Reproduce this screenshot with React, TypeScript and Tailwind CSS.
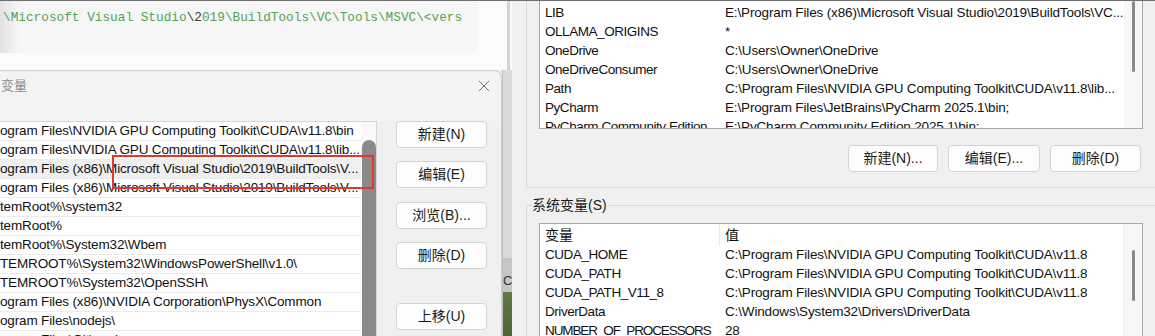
const ui = '"Liberation Sans", "Noto Sans CJK SC", sans-serif';

const leftRows = [
  "ogram Files\\NVIDIA GPU Computing Toolkit\\CUDA\\v11.8\\bin",
  "ogram Files\\NVIDIA GPU Computing Toolkit\\CUDA\\v11.8\\lib...",
  "ogram Files (x86)\\Microsoft Visual Studio\\2019\\BuildTools\\V...",
  "ogram Files (x86)\\Microsoft Visual Studio\\2019\\BuildTools\\V...",
  "temRoot%\\system32",
  "temRoot%",
  "temRoot%\\System32\\Wbem",
  "TEMROOT%\\System32\\WindowsPowerShell\\v1.0\\",
  "TEMROOT%\\System32\\OpenSSH\\",
  "ogram Files (x86)\\NVIDIA Corporation\\PhysX\\Common",
  "ogram Files\\nodejs\\",
  "ogram Files\\Git\\cmd",
];

const userVars = [
  ["LIB", "E:\\Program Files (x86)\\Microsoft Visual Studio\\2019\\BuildTools\\VC..."],
  ["OLLAMA_ORIGINS", "*"],
  ["OneDrive", "C:\\Users\\Owner\\OneDrive"],
  ["OneDriveConsumer", "C:\\Users\\Owner\\OneDrive"],
  ["Path", "C:\\Program Files\\NVIDIA GPU Computing Toolkit\\CUDA\\v11.8\\lib..."],
  ["PyCharm", "E:\\Program Files\\JetBrains\\PyCharm 2025.1\\bin;"],
  ["PyCharm Community Edition", "E:\\PyCharm Community Edition 2025.1\\bin;"],
];

const sysVars = [
  ["CUDA_HOME", "C:\\Program Files\\NVIDIA GPU Computing Toolkit\\CUDA\\v11.8"],
  ["CUDA_PATH", "C:\\Program Files\\NVIDIA GPU Computing Toolkit\\CUDA\\v11.8"],
  ["CUDA_PATH_V11_8", "C:\\Program Files\\NVIDIA GPU Computing Toolkit\\CUDA\\v11.8"],
  ["DriverData", "C:\\Windows\\System32\\Drivers\\DriverData"],
  ["NUMBER_OF_PROCESSORS", "28"],
];

function Btn({ label, className = "" }: { label: string; className?: string }) {
  return (
    <div
      className={`flex shrink-0 items-center justify-center rounded-[4px] border border-[#d3d3d3] bg-[#fdfdfd] text-[14px] text-[#1b1b1b] ${className}`}
    >
      {label}
    </div>
  );
}

function VarRow({ name, value }: { name: string; value: string }) {
  const tight = name.length > 18 && name === name.toUpperCase();
  return (
    <div className="flex h-[19px] items-center whitespace-nowrap text-[13.5px] text-[#111]">
      <div
        className={`w-[185px] shrink-0 overflow-hidden pl-[5px] ${
          tight ? "tracking-[-1.1px]" : "tracking-[-0.45px]"
        }`}
      >
        {name}
      </div>
      <div className="overflow-hidden tracking-[-0.15px]">{value}</div>
    </div>
  );
}

function EditDialog() {
  return (
    <div className="flex w-[502px] shrink-0 flex-col rounded-tr-[8px] border-t border-r border-[#cdcdcd] bg-[#f0f0f0]">
      <div className="flex h-[50px] items-start justify-between rounded-tr-[8px] bg-[#f3f3f3] pt-[5px]">
        <span className="pl-[1px] text-[13px] text-[#8c8c8c]">变量</span>
        <svg width="12" height="12" viewBox="0 0 12 12" className="mr-[11px] mt-[4px]">
          <path d="M1 1 L11 11 M11 1 L1 11" stroke="#777" strokeWidth="1" />
        </svg>
      </div>
      <div className="flex flex-1">
        <div className="relative flex h-full w-[377px] shrink-0 border-t border-r border-[#d6d6d6] bg-white">
          <div className="flex w-[361px] flex-col">
            {leftRows.map((r, i) => (
              <div
                key={i}
                className={`h-[19px] shrink-0 overflow-hidden whitespace-nowrap border-b border-[#ebebeb] text-[13.5px] leading-[18px] tracking-[-0.15px] text-[#111] ${
                  i === 2 ? "bg-[#efefef]" : ""
                }`}
              >
                {r}
              </div>
            ))}
          </div>
          <div className="flex flex-1 justify-center bg-[#f9f9f9] pt-[18px]">
            <div className="ml-[1px] w-[3px] flex-1 rounded-full bg-[#8a8a8a]" />
          </div>
          <div className="absolute left-[112px] top-[33px] h-[34px] w-[262px] border-2 border-[#e6352b]" />
        </div>
        <div className="ml-[19px] flex w-[91px] flex-col">
          <Btn label="新建(N)" className="h-[27px]" />
          <Btn label="编辑(E)" className="mt-[13px] h-[27px]" />
          <Btn label="浏览(B)..." className="mt-[14px] h-[27px]" />
          <Btn label="删除(D)" className="mt-[13px] h-[27px]" />
          <Btn label="上移(U)" className="mt-[34px] h-[27px]" />
        </div>
      </div>
    </div>
  );
}

export default function App() {
  return (
    <div
      className="flex h-[336px] w-[1155px] overflow-hidden border-t border-[#6f6f6f] bg-[#f0f0f0]"
      style={{ fontFamily: ui }}
    >
      <div className="flex w-[512px] shrink-0 flex-col">
        <div className="flex h-[69px] shrink-0 bg-[#fbfbfb]">
          <div className="h-[52px] w-[478px] rounded-br-[10px] bg-[#f5f6f5] bg-gradient-to-r from-[#e2e2e2] via-[#f5f6f5] via-[4%] to-[#f5f6f5]">
            <div
              className="whitespace-nowrap pl-[3px] pt-[7px] text-[12.75px] text-[#52a452]"
              style={{ fontFamily: '"Liberation Mono", monospace' }}
            >
              \Microsoft Visual Studio<span className="text-[#3a3a3a]">\2</span>019\BuildTools\VC\Tools\MSVC\&lt;vers
            </div>
          </div>
          <div className="flex-1" />
          <div className="w-[3px] bg-[#d4d4d4]" />
          <div className="w-[2px]" />
        </div>
        <div className="flex flex-1">
          <EditDialog />
          <div className="flex w-[10px] flex-col border-l border-[#c0c0c0]">
            <div className="h-[188px] bg-[#dadada]" />
            <div className="h-[34px] overflow-hidden bg-[#c5c5c5] pt-[16px] text-[13px] leading-none text-[#333]">C:</div>
            <div className="flex-1 bg-gradient-to-b from-[#5f7a45] to-[#45602f]" />
          </div>
        </div>
      </div>

      <div className="flex w-[643px] shrink-0 flex-col pl-[14px]">
        <div className="h-[187px] shrink-0 border-b border-l border-[#d8d8d8] pl-[12px]">
          <div className="flex h-[128px] w-[604px] overflow-hidden border-r border-b border-l border-[#a8a8a8] bg-white">
            <div className="min-w-0 flex-1 pt-[3px]">
              {userVars.map(([n, v]) => (
                <VarRow key={n} name={n} value={v} />
              ))}
            </div>
            <div className="flex w-[18px] justify-center bg-[#f7f7f7]">
              <div className="h-[71px] w-[3px] rounded-full bg-[#8a8a8a]" />
            </div>
          </div>
          <div className="ml-[309px] mt-[16px] flex gap-[10px]">
            <Btn label="新建(N)..." className="h-[27px] w-[90px]" />
            <Btn label="编辑(E)..." className="h-[27px] w-[92px]" />
            <Btn label="删除(D)" className="h-[27px] w-[91px]" />
          </div>
        </div>
        <div className="relative mt-[17px] flex-1 border-t border-l border-[#d8d8d8] pl-[12px] pt-[17px]">
          <span className="absolute left-[5px] top-[-11px] bg-[#f0f0f0] pr-[1px] text-[14px] leading-[20px] text-[#1b1b1b]">
            系统变量(S)
          </span>
          <div className="flex h-[200px] w-[604px] border border-[#a8a8a8] bg-white">
            <div className="min-w-0 flex-1">
              <div className="flex h-[22px] items-center text-[14px] text-[#111]">
                <div className="h-full w-[180px] shrink-0 border-r border-[#e8e8e8] pl-[5px] leading-[22px]">变量</div>
                <div className="pl-[5px]">值</div>
              </div>
              {sysVars.map(([n, v]) => (
                <VarRow key={n} name={n} value={v} />
              ))}
            </div>
            <div className="flex w-[19px] flex-col items-center border-l border-[#ececec] bg-[#f7f7f7] pt-[26px]">
              <div className="h-[51px] w-[3px] rounded-full bg-[#8a8a8a]" />
            </div>
          </div>
        </div>
      </div>
    </div>
  );
}
